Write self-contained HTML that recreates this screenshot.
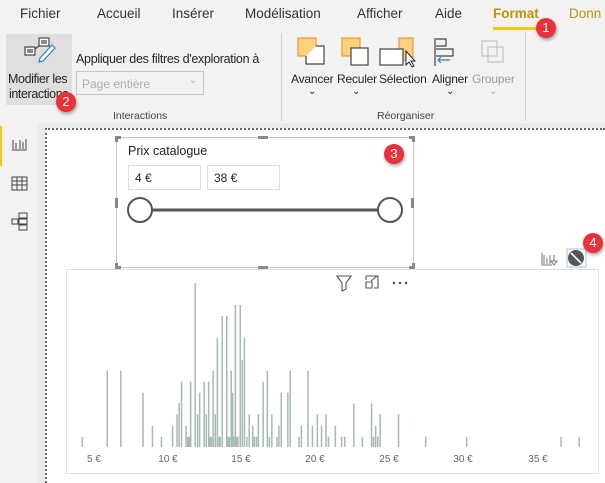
<!DOCTYPE html>
<html><head><meta charset="utf-8"><style>
*{margin:0;padding:0;box-sizing:border-box}
body{width:605px;height:483px;overflow:hidden;background:#fff;font-family:"Liberation Sans",sans-serif;position:relative;color:#252423}
.a{position:absolute;white-space:nowrap}
.tab{position:absolute;top:6px;font-size:13.5px;color:#333}
.lbl{font-size:12px;color:#252423;letter-spacing:-0.2px}
.badge{position:absolute;width:20px;height:20px;border-radius:50%;background:#e8313a;color:#fff;font-size:13px;text-align:center;line-height:20px;box-shadow:1px 2px 3px rgba(0,0,0,.35)}
</style></head><body>
<div class="a" style="left:0;top:0;width:605px;height:123px;background:#f3f2f1"></div>
<div class="tab" style="left:20px">Fichier</div>
<div class="tab" style="left:97px">Accueil</div>
<div class="tab" style="left:172px">Insérer</div>
<div class="tab" style="left:245px">Modélisation</div>
<div class="tab" style="left:357px">Afficher</div>
<div class="tab" style="left:435px">Aide</div>
<div class="tab" style="left:493px;color:#b8940a;font-weight:bold">Format</div>
<div class="tab" style="left:569px;color:#b8940a">Donn</div>
<div class="a" style="left:493px;top:27px;width:45px;height:3px;background:#f2c811"></div>

<div class="a" style="left:6px;top:34px;width:66px;height:71px;background:#e1dfdd"></div>
<svg class="a" style="left:22px;top:36px" width="36" height="30" viewBox="0 0 36 30" fill="none" stroke="#444" stroke-width="1.2">
<rect x="3" y="11" width="10" height="8" fill="#fff"/><rect x="17" y="2" width="10" height="8" fill="#fff"/>
<path d="M5 14h6M5 16h6M19 5h6M19 7h6M13 13l4-3"/>
<path d="M30 9l3 3-12 13-4 1 1-4z" stroke="#2b7cd3" fill="#fff"/></svg>
<div class="a lbl" style="left:8px;top:72px;font-size:12.5px;letter-spacing:-0.4px">Modifier les</div>
<div class="a lbl" style="left:9px;top:87px;font-size:12.5px;letter-spacing:-0.4px">interactions</div>
<div class="a lbl" style="left:76px;top:52px;font-size:12.5px;letter-spacing:-0.3px">Appliquer des filtres d'exploration à</div>
<div class="a" style="left:76px;top:71px;width:128px;height:24px;border:1px solid #c8c6c4;background:#f3f2f1;color:#b0aeac;font-size:12px;padding:5px 0 0 5px">Page entière<span style="position:absolute;right:6px;top:3px;font-size:10px">⌄</span></div>
<div class="a" style="left:113px;top:110px;font-size:10.5px;color:#444">Interactions</div>
<div class="a" style="left:281px;top:33px;width:1px;height:88px;background:#d2d0ce"></div>
<div class="a" style="left:525px;top:33px;width:1px;height:88px;background:#d2d0ce"></div>

<svg class="a" style="left:290px;top:36px" width="240" height="32" viewBox="0 0 240 32">
<rect x="8" y="2" width="18" height="18" fill="#fcd27f" stroke="#e8983a" stroke-width="1.2"/>
<path d="M26 10h8v18h-18v-8" fill="#fff" stroke="#444" stroke-width="1.2"/>
<rect x="52" y="2" width="18" height="18" fill="#fcd27f" stroke="#e8983a" stroke-width="1.2"/>
<rect x="61" y="12" width="17" height="17" fill="#fff" stroke="#444" stroke-width="1.2"/>
<rect x="109" y="2" width="14" height="22" fill="#fcd27f" stroke="#e8983a" stroke-width="1.2"/>
<rect x="90" y="13" width="23" height="16" fill="#fff" stroke="#444" stroke-width="1.2"/>
<path d="M116 15l0 14 3-3 3 5 2-1-3-5h4z" fill="#fff" stroke="#222" stroke-width="1"/>
<path d="M145 2v28M146 3h10v7h-10M146 13h17v7h-17" fill="none" stroke="#444" stroke-width="1.2"/>
<path d="M160 24h-12m3-3l-3 3 3 3" fill="none" stroke="#2b7cd3" stroke-width="1.2"/>
<g stroke="#bbb" fill="none" stroke-width="1"><rect x="192" y="5" width="15" height="15"/><rect x="198" y="11" width="15" height="15"/></g>
</svg>
<div class="a lbl" style="left:291px;top:72px">Avancer</div>
<div class="a lbl" style="left:337px;top:72px">Reculer</div>
<div class="a lbl" style="left:379px;top:72px">Sélection</div>
<div class="a lbl" style="left:432px;top:72px">Aligner</div>
<div class="a lbl" style="left:472px;top:72px;color:#a19f9d">Grouper</div>
<div class="a" style="left:308px;top:86px;font-size:10px">⌄</div>
<div class="a" style="left:352px;top:86px;font-size:10px">⌄</div>
<div class="a" style="left:446px;top:86px;font-size:10px">⌄</div>
<div class="a" style="left:489px;top:86px;font-size:10px;color:#aaa">⌄</div>
<div class="a" style="left:377px;top:110px;font-size:10.5px;color:#444">Réorganiser</div>

<div class="a" style="left:0;top:123px;width:605px;height:360px;background:#eaeaea"></div>
<div class="a" style="left:0;top:123px;width:38px;height:360px;background:#f3f2f1"></div>
<div class="a" style="left:0;top:126px;width:2px;height:40px;background:#f2c811"></div>
<svg class="a" style="left:10px;top:134px" width="20" height="100" viewBox="0 0 20 100" fill="none" stroke="#444" stroke-width="1">
<path d="M2 16h15M3 15V6M6 15V9M10 15V6M13 15V8M16 15V5"/>
<rect x="2" y="43" width="15" height="13"/><path d="M2 47h15M2 51h15M7 43v13M12 43v13"/>
<rect x="2" y="85" width="6" height="5"/><rect x="9" y="79" width="8" height="5"/><rect x="9" y="85" width="8" height="5"/><rect x="9" y="91" width="8" height="5"/>
</svg>
<div class="a" style="left:45px;top:128px;width:560px;height:355px;background:#fff;border-top:2px dotted #666;border-left:2px dotted #666"></div>

<div class="a" style="left:116px;top:137px;width:298px;height:131px;border:1px solid #c8c6c4"></div>
<div class="a" style="left:115px;top:136px;width:6px;height:6px;border-left:3px solid #888;border-top:3px solid #888"></div>
<div class="a" style="left:409px;top:136px;width:6px;height:6px;border-right:3px solid #888;border-top:3px solid #888"></div>
<div class="a" style="left:115px;top:263px;width:6px;height:6px;border-left:3px solid #888;border-bottom:3px solid #888"></div>
<div class="a" style="left:409px;top:263px;width:6px;height:6px;border-right:3px solid #888;border-bottom:3px solid #888"></div>
<div class="a" style="left:258px;top:136px;width:10px;height:3px;background:#888"></div>
<div class="a" style="left:258px;top:266px;width:10px;height:3px;background:#888"></div>
<div class="a" style="left:115px;top:198px;width:3px;height:10px;background:#888"></div>
<div class="a" style="left:411px;top:198px;width:3px;height:10px;background:#888"></div>
<div class="a" style="left:128px;top:144px;font-size:12.5px">Prix catalogue</div>
<div class="a" style="left:128px;top:165px;width:73px;height:25px;border:1px solid #e1dfdd;font-size:12px;padding:5px 0 0 6px">4 €</div>
<div class="a" style="left:207px;top:165px;width:73px;height:25px;border:1px solid #e1dfdd;font-size:12px;padding:5px 0 0 6px">38 €</div>
<svg class="a" style="left:125px;top:195px" width="280" height="30"><line x1="15" y1="15" x2="265" y2="15" stroke="#555" stroke-width="3"/><circle cx="15" cy="15" r="12" fill="#fff" stroke="#555" stroke-width="2"/><circle cx="265" cy="15" r="12" fill="#fff" stroke="#555" stroke-width="2"/></svg>

<div class="a" style="left:66px;top:269px;width:533px;height:205px;border:1px solid #e1dfdd"></div>
<svg class="a" style="left:0;top:0" width="605" height="483">
<g fill="none" stroke="#555" stroke-width="1.1">
<path d="M337 276h14l-5 7v6l-4 2v-8z"/><path d="M366 280v-4h12v12h-4M366 282h6v6h-6zM371 281l6-5M374 276h4v4"/>
</g>
<g fill="#555"><circle cx="394" cy="283" r="1.3"/><circle cx="400" cy="283" r="1.3"/><circle cx="406" cy="283" r="1.3"/></g>
<g fill="none" stroke="#777" stroke-width="1"><path d="M542 253v12h10M544 264v-9M547 264v-6M550 264v-9"/><path d="M554 255v6M551 261h6l-3 4z"/></g>
<rect x="567" y="249" width="19" height="18" fill="none" stroke="#9cc3f0"/>
<circle cx="576" cy="258" r="8" fill="#555"/><line x1="571" y1="253" x2="581" y2="263" stroke="#fff" stroke-width="1.6"/>
<g id="bars" fill="#a7b9b5"></g>
<g font-size="10" fill="#666" font-family="Liberation Sans,sans-serif" text-anchor="middle">
<text x="94" y="462">5 €</text><text x="168" y="462">10 €</text><text x="241" y="462">15 €</text><text x="315" y="462">20 €</text><text x="389" y="462">25 €</text><text x="463" y="462">30 €</text><text x="538" y="462">35 €</text>
</g>
</svg>
<script>
var d=[[64,590],[136,392],[175,392],[239,458],[266,557],[292,590],[324,557],[337,523],[343,490],[350,425],[363,557],[368,590],[372,590],[376,425],[389,130],[396,523],[402,458],[415,425],[421,523],[428,425],[432,590],[436,590],[441,392],[447,523],[453,293],[458,590],[461,590],[467,228],[480,228],[484,590],[488,590],[493,392],[497,458],[500,590],[505,195],[508,590],[512,590],[519,195],[525,360],[531,293],[538,590],[545,523],[555,557],[560,590],[566,590],[571,523],[585,425],[597,392],[603,590],[610,523],[625,590],[630,557],[637,458],[656,458],[663,392],[688,590],[695,557],[714,392],[727,557],[741,523],[753,557],[766,523],[773,590],[793,557],[811,590],[820,590],[846,490],[871,590],[897,490],[903,590],[909,557],[915,590],[922,523],[975,523],[1053,590],[1171,590],[1443,590],[1495,590]];
var g=document.getElementById('bars'),s='';
d.forEach(function(p){var x=60+p[0]/2.88,y=240+p[1]/3;s+='<rect x="'+(x-0.7).toFixed(1)+'" y="'+y.toFixed(1)+'" width="1.5" height="'+(447-y).toFixed(1)+'"/>';});
g.innerHTML=s;
</script>
<div class="badge" style="left:536px;top:18px">1</div>
<div class="badge" style="left:56px;top:92px">2</div>
<div class="badge" style="left:384px;top:144px">3</div>
<div class="badge" style="left:583px;top:233px">4</div>
</body></html>
